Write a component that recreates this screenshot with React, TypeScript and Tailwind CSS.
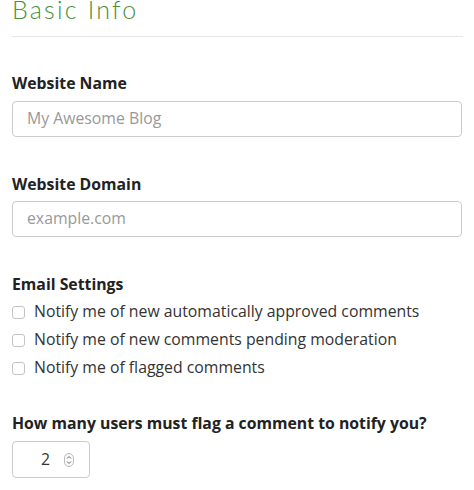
import React from 'react';

const EMAIL_OPTIONS = [
  'Notify me of new automatically approved comments',
  'Notify me of new comments pending moderation',
  'Notify me of flagged comments',
];

function Checkbox() {
  return (
    <span className="inline-block w-[13px] h-[13px] rounded-[3px] border border-[#c4c4c4] bg-white shrink-0" />
  );
}

function Spinner() {
  return (
    <svg width="10" height="14" viewBox="0 0 10 14" fill="none">
      <rect x="0.5" y="0.5" width="9" height="13" rx="4.5" stroke="#bbb" fill="#fafafa" />
      <path d="M3 5.5 L5 3.5 L7 5.5" stroke="#666" strokeWidth="1" fill="none" />
      <path d="M3 8.5 L5 10.5 L7 8.5" stroke="#666" strokeWidth="1" fill="none" />
    </svg>
  );
}

export default function App() {
  return (
    <div className="w-[474px] h-[490px] bg-white overflow-hidden px-3 text-[#333]" style={{ fontFamily: '"Open Sans", sans-serif' }}>
      {/* Cabeçalho */}
      <div className="h-[37px] border-b border-[#e5e5e5] mr-[-1px] flex flex-col justify-end pb-[14px]">
        <h2
          className="text-[25px] leading-[25px] font-light tracking-[2.2px] text-[#4a8f3a]"
          style={{ fontFamily: 'Lato, sans-serif' }}
        >
          Basic Info
        </h2>
      </div>

      <div className="pt-[34px]">
        <label className="block text-[15.8px] leading-6 font-bold text-[#222]">Website Name</label>
        <div className="mt-[6px] h-[36px] border border-[#ccc] rounded-[4px] flex items-center pl-[14px] text-[15.8px] text-[#999]">
          My Awesome Blog
        </div>
      </div>

      <div className="pt-[35px]">
        <label className="block text-[15.8px] leading-6 font-bold text-[#222]">Website Domain</label>
        <div className="mt-[5px] h-[36px] border border-[#ccc] rounded-[4px] flex items-center pl-[14px] text-[15.8px] text-[#999]">
          example.com
        </div>
      </div>

      <div className="pt-[35px]">
        <div className="text-[15.8px] leading-6 font-bold text-[#222]">Email Settings</div>
        <div className="mt-[2px] flex flex-col">
          {EMAIL_OPTIONS.map((opt) => (
            <div key={opt} className="h-7 flex items-center gap-[9px] text-[15.8px]">
              <Checkbox />
              <span>{opt}</span>
            </div>
          ))}
        </div>
      </div>

      <div className="pt-[29px]">
        <div className="text-[15.8px] leading-6 font-bold text-[#222]">How many users must flag a comment to notify you?</div>
        <div className="mt-[6px] w-[78px] h-[37px] border border-[#ccc] rounded-[4px] flex items-center justify-end pr-[15px] gap-[14px] text-[15.8px]">
          <span>2</span>
          <Spinner />
        </div>
      </div>
    </div>
  );
}
